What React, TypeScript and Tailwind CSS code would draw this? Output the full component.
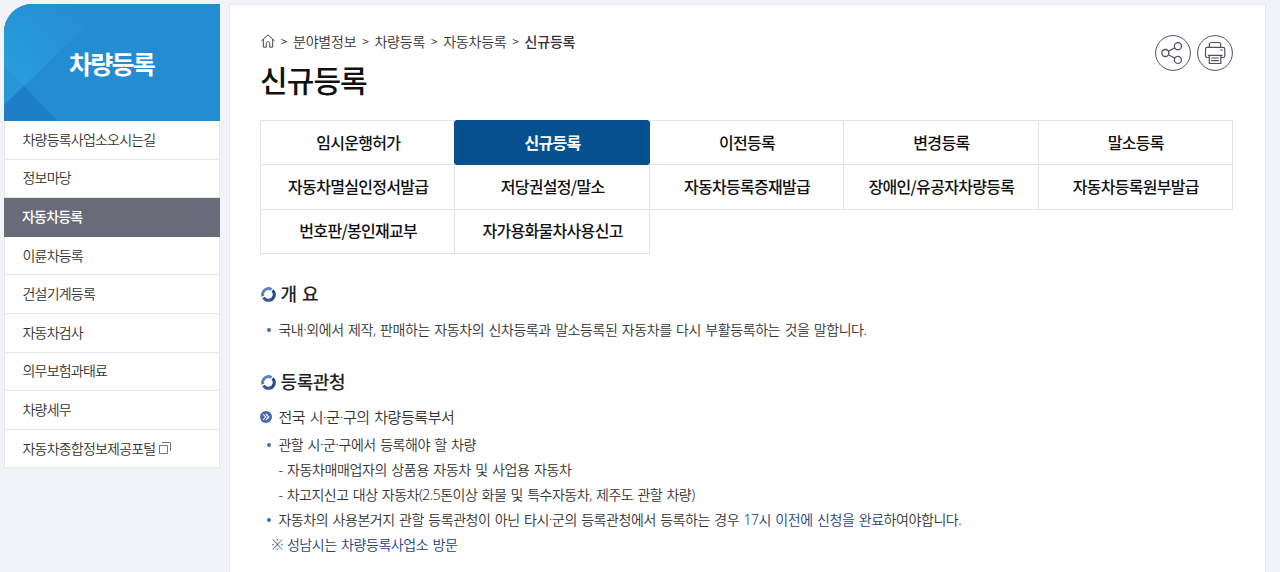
import type { ReactNode } from "react";

const menu = [
  { label: "차량등록사업소오시는길" },
  { label: "정보마당" },
  { label: "자동차등록", active: true },
  { label: "이륜차등록" },
  { label: "건설기계등록" },
  { label: "자동차검사" },
  { label: "의무보험과태료" },
  { label: "차량세무" },
  { label: "자동차종합정보제공포털", external: true },
];

const tabs = [
  "임시운행허가",
  "신규등록",
  "이전등록",
  "변경등록",
  "말소등록",
  "자동차멸실인정서발급",
  "저당권설정/말소",
  "자동차등록증재발급",
  "장애인/유공자차량등록",
  "자동차등록원부발급",
  "번호판/봉인재교부",
  "자가용화물차사용신고",
];

function HomeIcon() {
  return (
    <svg width="14" height="14" viewBox="0 0 14 14" fill="none" stroke="#444" strokeWidth="1" strokeLinejoin="round" strokeLinecap="round">
      <path d="M.7 6.6 7 .9l6.3 5.7" />
      <path d="M2.3 5.6v7.6h3V9.4c0-1 .7-1.7 1.7-1.7s1.700.7 1.700 1.700v3.800h3V5.600" />
    </svg>
  );
}

function ShareIcon() {
  return (
    <svg width="36" height="36" viewBox="0 0 36 36" fill="none" stroke="#4f515f" strokeWidth="1.300">
      <circle cx="18" cy="18" r="17.400" strokeWidth="1" />
      <circle cx="10.300" cy="18" r="3.500" />
      <circle cx="22.900" cy="11.200" r="3.500" />
      <circle cx="22.900" cy="24.900" r="3.500" />
      <path d="m13.400 16.300 6.400-3.400M13.400 19.700l6.400 3.500" />
    </svg>
  );
}

function PrintIcon() {
  return (
    <svg width="36" height="36" viewBox="0 0 36 36" fill="none" stroke="#4f515f" strokeWidth="1.200" strokeLinejoin="round">
      <circle cx="18" cy="18" r="17.400" strokeWidth="1" />
      <path d="M12.300 12.300V9.500c0-1.100.9-2 2-2h7.400c1.100 0 2 .9 2 2v2.800" />
      <path d="M12.300 22.500h-2.100c-.9 0-1.700-.8-1.700-1.700v-6.600c0-1 .8-1.800 1.700-1.800h15.900c.9 0 1.700.8 1.700 1.800v6.600c0 .9-.8 1.700-1.700 1.700H24" />
      <path d="M10.800 20.300h14.700M12.300 20.300v8.200h11.500v-8.200M14.300 23h7.500M14.300 25.600h7.500" />
      <path d="M23.500 15h2" />
    </svg>
  );
}

function RingIcon() {
  return (
    <svg width="15" height="15" viewBox="0 0 15 15" fill="none" strokeWidth="3" className="mt-px shrink-0">
      <path d="M1.900 9.200A5.800 5.800 0 0 1 10.600 2.600" stroke="#5f80b9" />
      <path d="M11.500 3.300A5.800 5.800 0 0 1 8.300 13.200" stroke="#254b8c" />
      <path d="M8.500 13.200A5.800 5.800 0 0 1 2.500 10.400" stroke="#34599a" />
    </svg>
  );
}

function ChevronBadge() {
  return (
    <svg width="12" height="12" viewBox="0 0 12 12" fill="none" className="shrink-0">
      <circle cx="6" cy="6" r="6" fill="#4a69a8" />
      <path d="M3.300 3.400 5.700 6 3.300 8.600M6 3l2.800 3L6 9" stroke="#fff" strokeWidth="1.100" />
    </svg>
  );
}

function Heading({ children }: { children: ReactNode }) {
  return (
    <h2 className="flex h-6 items-center gap-[4.500px] pl-[0.600px] text-[18px] font-medium tracking-[-0.400px] text-[#222] [word-spacing:1px]">
      <RingIcon />
      <span>{children}</span>
    </h2>
  );
}

function Bullet({ children }: { children: ReactNode }) {
  return (
    <li className="flex h-[25px] items-center pl-[6.600px]">
      <span className="mr-[7.400px] size-[4px] shrink-0 rounded-full bg-[#4a6aa8]" />
      <span>{children}</span>
    </li>
  );
}

function Crumb({ children }: { children: ReactNode }) {
  return (
    <>
      <span className="w-[18px] text-center text-[12px]">&gt;</span>
      {children}
    </>
  );
}

export default function App() {
  return (
    <div className="flex h-[572px] w-[1280px] items-start overflow-hidden bg-[#f2f3f8] pt-1 pl-1 font-['Noto_Sans_CJK_KR',sans-serif] text-[14px] font-[350] whitespace-nowrap text-[#333]">
      <aside className="w-[216px] shrink-0">
        <div className="relative flex h-[117px] items-center justify-center overflow-hidden rounded-tl-[28px] bg-[#248dd1]">
          <svg className="absolute inset-0" width="216" height="117" viewBox="0 0 216 117">
            <defs>
              <linearGradient id="shine" x1="0" y1="0.700" x2="0.700" y2="0">
                <stop offset="0" stopColor="#289cdd" />
                <stop offset="1" stopColor="#248dd1" />
              </linearGradient>
            </defs>
            <path d="M0 0h104L20 82 0 62z" fill="url(#shine)" />
            <path d="M0 62l20 20L0 101z" fill="#2795d8" />
            <path d="M20 82l34 35H0v-16z" fill="#1e7fc7" />
          </svg>
          <h1 className="relative pt-[3px] pr-px text-[25px] font-bold tracking-[-1.700px] text-white">차량등록</h1>
        </div>
        <ul className="border-x border-[#e5e6ea] bg-white">
          {menu.map((item) => (
            <li
              key={item.label}
              className={
                item.active
                  ? "-mx-px flex h-[38.600px] items-center bg-[#696c78] pb-[2px] pl-[18px] font-medium tracking-[-0.800px] text-white"
                  : "flex h-[38.600px] items-center border-b border-[#e5e6e8] pb-px pl-[17.500px] tracking-[-0.800px]"
              }
            >
              {item.label}
              {item.external && (
                <svg className="ml-[4px]" width="12" height="12" viewBox="0 0 12 12" fill="none" stroke="#777">
                  <path d="M.5 3.500h8v8h-8zM3 .5h8.500V9" />
                </svg>
              )}
            </li>
          ))}
        </ul>
      </aside>

      <main className="ml-[9px] h-[600px] w-[1037px] shrink-0 border border-[#e5e6ea] bg-white pt-[25px] pl-[31px]">
        <div className="flex justify-between pr-[32px]">
          <div>
            <nav className="flex h-[22px] items-center tracking-[-0.200px]">
              <HomeIcon />
              <Crumb>분야별정보</Crumb>
              <Crumb>차량등록</Crumb>
              <Crumb>자동차등록</Crumb>
              <Crumb>
                <span className="font-medium">신규등록</span>
              </Crumb>
            </nav>
            <h1 className="-ml-px mt-[4px] h-[46px] text-[30px] leading-[46px] font-medium tracking-[-0.900px] text-[#111]">신규등록</h1>
          </div>
          <div className="flex gap-[6px] pt-[5px]">
            <ShareIcon />
            <PrintIcon />
          </div>
        </div>

        <ul className="mt-[19px] grid w-[972px] auto-rows-[44.400px] grid-cols-5 text-[16px] font-medium tracking-[-0.700px] text-[#111]">
          {tabs.map((tab) => (
            <li
              key={tab}
              className={
                tab === "신규등록"
                  ? "z-10 -mt-px -ml-px flex items-center justify-center rounded-[3px] border border-[#06508f] bg-[#06508f] pb-[2px] pl-px font-bold text-white"
                  : "-mt-px -ml-px flex items-center justify-center border border-[#e3e3e3] pb-[2px] pl-px"
              }
            >
              {tab}
            </li>
          ))}
        </ul>

        <section className="mt-[28px] -ml-[0.600px] font-['Noto_Sans','Noto_Sans_CJK_KR',sans-serif] tracking-[-0.430px] [word-spacing:1.200px]">
          <Heading>개 요</Heading>
          <ul className="mt-[11px]">
            <Bullet>국내·외에서 제작, 판매하는 자동차의 신차등록과 말소등록된 자동차를 다시 부활등록하는 것을 말합니다.</Bullet>
          </ul>
        </section>

        <section className="mt-[28px] -ml-[0.600px] font-['Noto_Sans','Noto_Sans_CJK_KR',sans-serif] tracking-[-0.430px] [word-spacing:1.100px]">
          <Heading>등록관청</Heading>
          <h3 className="mt-[10px] flex h-[26px] items-center gap-[6px] text-[15px]">
            <ChevronBadge />
            <span>전국 시·군·구의 차량등록부서</span>
          </h3>
          <ul className="mt-[2px]">
            <Bullet>관할 시·군·구에서 등록해야 할 차량</Bullet>
            <li className="h-[25px] pl-[18px] leading-[25px] tracking-[-0.370px]">- 자동차매매업자의 상품용 자동차 및 사업용 자동차</li>
            <li className="h-[25px] pl-[18px] leading-[25px] tracking-[-0.500px]">- 차고지신고 대상 자동차(2.5톤이상 화물 및 특수자동차, 제주도 관할 차량)</li>
            <Bullet>
              자동차의 사용본거지 관할 등록관청이 아닌 타시·군의 등록관청에서 등록하는 경우{" "}
              <span className="text-[#1c417f]">17시 이전에 신청을 완료</span>하여야합니다.
            </Bullet>
            <li className="h-[25px] pl-[11px] leading-[25px] text-[#1c417f]">※ 성남시는 차량등록사업소 방문</li>
          </ul>
        </section>
      </main>
    </div>
  );
}
